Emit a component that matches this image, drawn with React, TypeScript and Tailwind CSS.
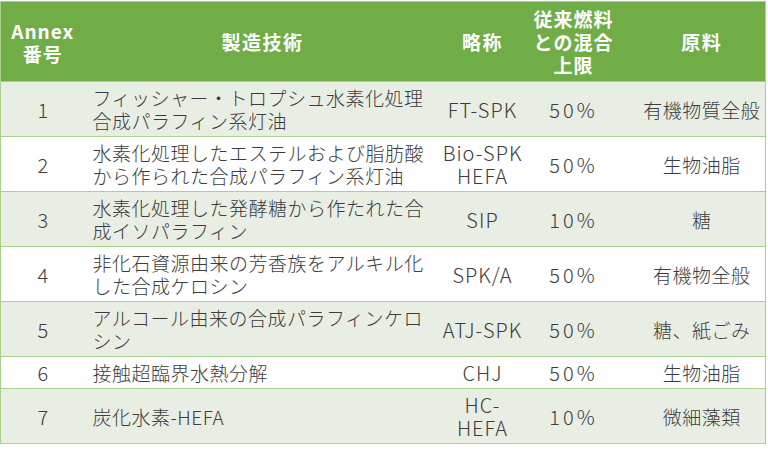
import React from 'react';

interface Row {
  no: string;
  tech: string[];
  abbr: string[];
  limit: string;
  material: string;
}

const ROWS: Row[] = [
  { no: '1', tech: ['フィッシャー・トロプシュ水素化処理', '合成パラフィン系灯油'], abbr: ['FT-SPK'], limit: '50%', material: '有機物質全般' },
  { no: '2', tech: ['水素化処理したエステルおよび脂肪酸', 'から作られた合成パラフィン系灯油'], abbr: ['Bio-SPK', 'HEFA'], limit: '50%', material: '生物油脂' },
  { no: '3', tech: ['水素化処理した発酵糖から作たれた合', '成イソパラフィン'], abbr: ['SIP'], limit: '10%', material: '糖' },
  { no: '4', tech: ['非化石資源由来の芳香族をアルキル化', 'した合成ケロシン'], abbr: ['SPK/A'], limit: '50%', material: '有機物全般' },
  { no: '5', tech: ['アルコール由来の合成パラフィンケロ', 'シン'], abbr: ['ATJ-SPK'], limit: '50%', material: '糖、紙ごみ' },
  { no: '6', tech: ['接触超臨界水熱分解'], abbr: ['CHJ'], limit: '50%', material: '生物油脂' },
  { no: '7', tech: ['炭化水素-HEFA'], abbr: ['HC-', 'HEFA'], limit: '10%', material: '微細藻類' },
];

function Lines({ lines }: { lines: string[] }) {
  return (
    <>
      {lines.map((l, i) => (
        <div key={i} className="whitespace-nowrap">{l}</div>
      ))}
    </>
  );
}

export default function App() {
  return (
    <div className="w-[768px] h-[450px] bg-white pt-[1px] font-['Noto_Sans_CJK_JP',sans-serif]">
      <table className="w-[765px] table-fixed border-collapse border border-[#a9d18e]">
        <colgroup>
          <col className="w-[84px]" />
          <col className="w-[356px]" />
          <col className="w-[84px]" />
          <col className="w-[98px]" />
          <col className="w-[143px]" />
        </colgroup>
        <thead>
          <tr className="bg-[#70ad47] text-white font-bold text-[19px] leading-[23px] tracking-[1px]">
            <th className="h-[80px] px-1 text-center align-middle font-bold">
              <div>Annex</div>
              <div>番号</div>
            </th>
            <th className="text-center align-middle font-bold tracking-[1.5px]">製造技術</th>
            <th className="text-center align-middle font-bold tracking-[1.5px]">略称</th>
            <th className="text-center align-middle font-bold tracking-[1px]">
              <div>従来燃料</div>
              <div>との混合</div>
              <div>上限</div>
            </th>
            <th className="pl-4 text-center align-middle font-bold tracking-[1.5px]">原料</th>
          </tr>
        </thead>
        <tbody>
          {ROWS.map((r, i) => (
            <tr
              key={r.no}
              className={`border-t border-[#a9d18e] font-light leading-[23px] text-[#3c3c3c] ${
                i % 2 === 0 ? 'bg-[#e8eee4]' : 'bg-white'
              }`}
            >
              <td className="py-[4px] text-center align-middle text-[20px]">{r.no}</td>
              <td className="py-[4px] pl-2 text-left align-middle text-[19px] tracking-[0.5px]">
                <Lines lines={r.tech} />
              </td>
              <td className="py-[4px] text-center align-middle text-[20px] tracking-[1px]">
                <Lines lines={r.abbr} />
              </td>
              <td className="py-[4px] text-center align-middle text-[20px] tracking-[3px]">{r.limit}</td>
              <td className="py-[4px] pl-4 text-center align-middle whitespace-nowrap text-[19px] tracking-[0.5px]">
                {r.material}
              </td>
            </tr>
          ))}
        </tbody>
      </table>
    </div>
  );
}
